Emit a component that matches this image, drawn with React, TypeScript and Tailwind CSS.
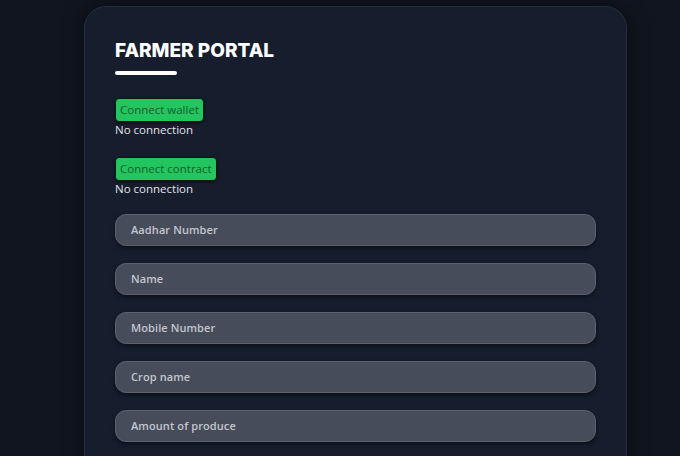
const fields = ["Aadhar Number", "Name", "Mobile Number", "Crop name", "Amount of produce"];

function ConnectBlock({ label }: { label: string }) {
  return (
    <div className="flex flex-col items-start">
      <button className="h-[24px] rounded-[4px] border border-[#0b1a10] bg-[#22c55e] px-[4px] text-[11.5px] leading-none text-[#155e30] shadow-[0_1px_3px_rgba(0,0,0,0.6)]">
        {label}
      </button>
      <p className="text-[11.5px] font-medium leading-[16px] text-[#e2e4e9]">No connection</p>
    </div>
  );
}

export default function App() {
  return (
    <main
      className="h-[456px] w-[680px] overflow-hidden bg-[#10151f] pt-[6px]"
      style={{ fontFamily: '"Open Sans", "Noto Sans", sans-serif' }}
    >
      <section className="ml-[84px] h-[480px] w-[543px] rounded-[22px] border border-[#262e3e] bg-[#161d2d] px-[30px] pt-[30px] shadow-[0_0_20px_rgba(0,0,0,0.5)]">
        <h1
          className="text-[19px] font-extrabold leading-[28px] text-white"
          style={{ fontFamily: "Inter, sans-serif" }}
        >
          FARMER PORTAL
        </h1>
        <div className="mt-[6px] h-[4px] w-[62px] rounded-full bg-white" />

        <div className="mt-[23px] flex flex-col gap-[19px]">
          <ConnectBlock label="Connect wallet" />
          <ConnectBlock label="Connect contract" />
        </div>

        <div className="mt-[17px] flex flex-col gap-[17px]">
          {fields.map((f) => (
            <div
              key={f}
              className="flex h-[32px] w-[481px] items-center rounded-[11px] border border-[#5b616d] bg-[#464c59] pl-[15px] text-[11px] font-semibold tracking-[0.1px] text-[#c3c6cd] shadow-[0_2px_4px_rgba(0,0,0,0.5)]"
            >
              {f}
            </div>
          ))}
        </div>
      </section>
    </main>
  );
}
